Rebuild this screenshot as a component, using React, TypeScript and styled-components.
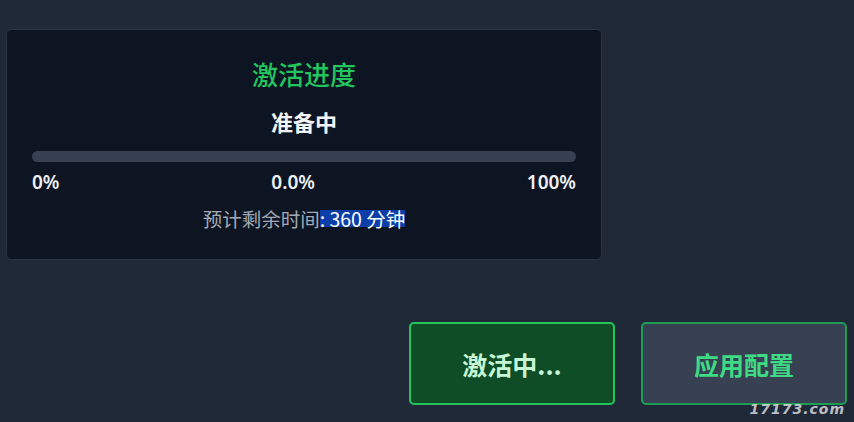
import React from "react";
import styled, { createGlobalStyle } from "styled-components";

const Global = createGlobalStyle`
  html, body { margin: 0; padding: 0; background: #202938; }
  body { font-family: "Noto Sans CJK SC", "Noto Sans", sans-serif; }
  * { box-sizing: border-box; }
`;

const Page = styled.div`
  position: relative;
  width: 854px;
  height: 422px;
  overflow: hidden;
  background: #202938;
  padding: 29px 7px 0 6px;
  display: flex;
  flex-direction: column;
`;

const Card = styled.section`
  width: 596px;
  height: 231px;
  background: #0d1523;
  border: 1px solid #2c3544;
  border-radius: 5px;
  padding: 27px 25px 0;
  display: flex;
  flex-direction: column;
  align-items: center;
`;

const Title = styled.h2`
  margin: 0;
  font-size: 26px;
  line-height: 34px;
  font-weight: 500;
  color: #22c55e;
`;

const Status = styled.div`
  margin-top: 15px;
  font-size: 22px;
  line-height: 30px;
  font-weight: 700;
  color: #f3f4f6;
`;

const Track = styled.div`
  margin-top: 15px;
  width: 100%;
  height: 11px;
  border-radius: 6px;
  background: #374151;
  overflow: hidden;
`;

const Fill = styled.div`
  height: 100%;
  background: #22c55e;
`;

const Labels = styled.div`
  margin-top: 7px;
  width: 100%;
  display: flex;
  justify-content: space-between;
  font-family: "Noto Sans", "Noto Sans CJK SC", sans-serif;
  font-size: 19px;
  line-height: 26px;
  font-weight: 600;
  color: #eef0f3;
`;

const Remaining = styled.div`
  margin-top: 11px;
  font-size: 19.5px;
  line-height: 26px;
  color: #a3a9b3;
`;

const Selected = styled.span`
  display: inline-block;
  height: 17px;
  line-height: 17px;
  background: #0b3ea8;
  color: #ffffff;
`;

const Actions = styled.div`
  margin-top: 62px;
  display: flex;
  justify-content: flex-end;
  gap: 26px;
`;

const Button = styled.button<{ $variant: "active" | "secondary" }>`
  width: 206px;
  height: 83px;
  border-radius: 5px;
  border: 2px solid ${(p) => (p.$variant === "active" ? "#22c55e" : "#1f9d55")};
  background: ${(p) => (p.$variant === "active" ? "#0f4d26" : "#374152")};
  color: ${(p) => (p.$variant === "active" ? "#c6f6d5" : "#3ddc84")};
  font-family: "Noto Sans CJK SC", sans-serif;
  font-size: 25px;
  font-weight: 700;
  cursor: pointer;
`;

const Watermark = styled.div`
  position: absolute;
  right: 9px;
  bottom: 5px;
  font-family: "DejaVu Sans", sans-serif;
  font-style: italic;
  font-weight: 700;
  font-size: 14px;
  letter-spacing: 1px;
  color: rgba(230, 230, 235, 0.8);
`;

export default function App() {
  const progress = 0;
  return (
    <Page>
      <Global />
      <Card>
        <Title>激活进度</Title>
        <Status>准备中</Status>
        <Track>
          <Fill style={{ width: `${progress}%` }} />
        </Track>
        <Labels>
          <span>0%</span>
          <span>0.0%</span>
          <span>100%</span>
        </Labels>
        <Remaining>
          预计剩余时间<Selected>: 360 分钟</Selected>
        </Remaining>
      </Card>
      <Actions>
        <Button $variant="active">激活中...</Button>
        <Button $variant="secondary">应用配置</Button>
      </Actions>
      <Watermark>17173.com</Watermark>
    </Page>
  );
}
